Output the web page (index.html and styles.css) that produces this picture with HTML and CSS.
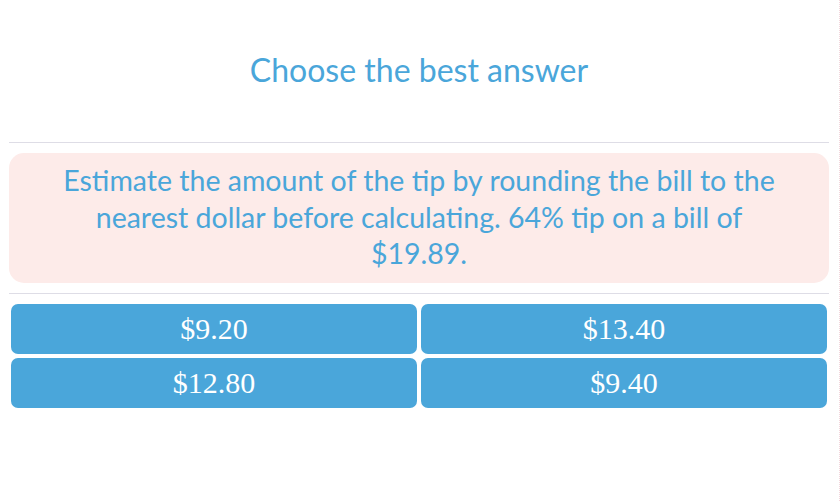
FILE: index.html
```html
<!DOCTYPE html>
<html lang="en">
<head>
  <meta charset="UTF-8">
  <meta name="viewport" content="width=device-width, initial-scale=1.0">
  <title>Quiz</title>
  <link rel="stylesheet" href="styles.css">
</head>
<body>
  <div class="page">
    <div class="quiz">
      <header class="quiz-header">
        <h1>Choose the best answer</h1>
      </header>

      <div class="question">
        <p>Estimate the amount of the tip by rounding the bill to the nearest dollar before calculating. 64% tip on a bill of $19.89.</p>
      </div>

      <div class="answers">
        <button class="answer">$9.20</button>
        <button class="answer">$13.40</button>
        <button class="answer">$12.80</button>
        <button class="answer">$9.40</button>
      </div>
    </div>
  </div>
</body>
</html>
```

FILE: styles.css
```css
* {
  margin: 0;
  padding: 0;
  box-sizing: border-box;
}

body {
  font-family: Lato, "Open Sans", sans-serif;
  background-color: #fff;
}

.page {
  min-height: 501px;
  border-right: 1px dotted #f3d6dc;
}

.quiz {
  width: 820px;
  margin-left: 9px;
}

/* Header */
.quiz-header {
  height: 143px;
  padding-top: 50px;
  border-bottom: 1px solid #dedde6;
  text-align: center;
}

.quiz-header h1 {
  font-size: 32px;
  font-weight: 400;
  line-height: 40px;
  color: #4aa6da;
}

/* Question box */
.question {
  margin-top: 10px;
  padding: 9px 40px;
  height: 130px;
  background-color: #fdebe9;
  border-radius: 15px;
  text-align: center;
}

.question p {
  font-size: 28.5px;
  line-height: 36.5px;
  color: #4aa6da;
}

/* Answers */
.answers {
  margin-top: 10px;
  padding-top: 8px;
  border-top: 1px solid #dedde6;
  display: grid;
  grid-template-columns: 1fr 1fr;
}

.answer {
  margin: 2px;
  height: 50px;
  border: none;
  border-radius: 7px;
  background-color: #4aa6da;
  color: #fff;
  font-family: "Liberation Serif", "Times New Roman", serif;
  font-size: 30px;
}
```
